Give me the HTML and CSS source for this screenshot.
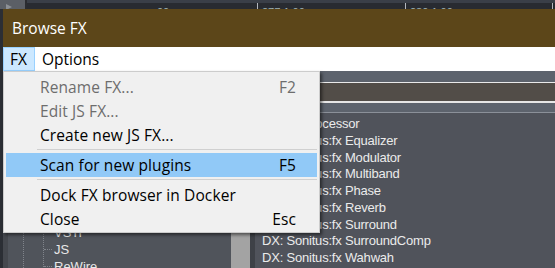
FILE: index.html
```html
<!DOCTYPE html>
<html>
<head>
<meta charset="utf-8">
<link rel="stylesheet" href="styles.css">
</head>
<body>
<div class="topstrip">
  <div class="tsbtn"><span class="tri"></span></div>
  <div class="ruler">
    <div class="rspacer"></div>
    <div class="rseg r0">00</div>
    <div class="rseg tick r1">277.1.00</div>
    <div class="rseg tick r2">280.1.00</div>
    <div class="rseg tick r3"></div>
  </div>
</div>
<div class="window">
  <div class="titlebar">Browse FX</div>
  <div class="menubar">
    <span class="mitem open">FX</span>
    <span class="mitem">Options</span>
  </div>
  <div class="content">
    <div class="leftpane">
      <div class="lstrip"></div>
      <div class="tree">
        <ul class="troot">
          <li class="tnode">Favorites</li>
          <li class="tnode">All Plugins
            <ul class="tkids">
              <li class="tkid">DX</li>
              <li class="tkid">DXi</li>
              <li class="tkid">VST</li>
              <li class="tkid">VST3</li>
              <li class="tkid">CLAP</li>
              <li class="tkid">CLAPi</li>
              <li class="tkid">VST3i</li>
              <li class="tkid">VSTi</li>
              <li class="tkid">JS</li>
              <li class="tkid">ReWire</li>
            </ul>
          </li>
          <li class="tnode">Recent</li>
        </ul>
      </div>
      <div class="vscroll"></div>
      <div class="vgap"></div>
    </div>
    <div class="rightpane">
      <div class="rtop"></div>
      <div class="search"></div>
      <div class="rgap"></div>
      <ul class="fxlist">
        <li>DX: ReProcessor</li>
        <li>DX: Sonitus:fx Equalizer</li>
        <li>DX: Sonitus:fx Modulator</li>
        <li>DX: Sonitus:fx Multiband</li>
        <li>DX: Sonitus:fx Phase</li>
        <li>DX: Sonitus:fx Reverb</li>
        <li>DX: Sonitus:fx Surround</li>
        <li>DX: Sonitus:fx SurroundComp</li>
        <li>DX: Sonitus:fx Wahwah</li>
        <li>DXi: ReaSynth</li>
      </ul>
    </div>
  </div>
  <div class="dropdown">
    <div class="ditem disabled"><span>Rename FX...</span><span>F2</span></div>
    <div class="ditem disabled"><span>Edit JS FX...</span><span></span></div>
    <div class="ditem"><span>Create new JS FX...</span><span></span></div>
    <div class="dsep"></div>
    <div class="ditem hot"><span>Scan for new plugins</span><span>F5</span></div>
    <div class="dsep"></div>
    <div class="ditem"><span>Dock FX browser in Docker</span><span></span></div>
    <div class="ditem"><span>Close</span><span>Esc</span></div>
  </div>
</div>
</body>
</html>
```
FILE: styles.css
```css
* { box-sizing: border-box; }
html, body { margin: 0; padding: 0; }
body {
  width: 555px;
  height: 268px;
  overflow: hidden;
  background: #2b2e34;
  font-family: "Open Sans", "Noto Sans", sans-serif;
}
ul { list-style: none; margin: 0; padding: 0; }

/* top strip (behind window) */
.topstrip {
  display: flex;
  height: 9px;
  overflow: hidden;
}
.tsbtn {
  background: #5b5f66;
  border-right: 2px solid #2a2c31;
  flex: none;
  width: 27px;
  padding: 4px 0 0 6px;
}
.tri {
  display: block;
  width: 0; height: 0;
  border-left: 6px solid #8c9096;
  border-top: 3px solid transparent;
  border-bottom: 3px solid transparent;
}
.ruler {
  flex: 1;
  display: flex;
  background: #282b31;
  border-top: 3px solid #3a3f48;
  font: 11px/11px "Liberation Sans", Arial, sans-serif;
  color: #9fb3b5;
}
.rspacer { width: 130px; flex: none; }
.rseg { flex: none; padding: 4px 0 0 4px; }
.r0 { width: 100px; padding-left: 0; }
.tick { border-left: 1px solid #b4b8be; }
.r1 { width: 148px; }
.r2 { width: 147px; }
.r3 { width: 3px; }

/* window */
.window {
  position: relative;
  margin-left: 3px;
}
.titlebar {
  height: 38px;
  background: #5c4619;
  color: #ffffff;
  font-size: 15.5px;
  line-height: 38px;
  padding-left: 9px;
}
.menubar {
  height: 24px;
  background: #ffffff;
  display: flex;
  font-size: 15.5px;
  color: #000;
}
.mitem {
  line-height: 24px;
  padding: 0 7px;
}
.mitem.open {
  background: #cce8ff;
  border: 1px solid #99d1ff;
  line-height: 22px;
  padding: 0 7px 0 6px;
}

.content {
  display: flex;
  height: 197px;
  overflow: hidden;
}
.leftpane {
  width: 252px;
  flex: none;
  display: flex;
}
.lstrip { width: 5px; flex: none; background: #45484e; }
.tree {
  flex: 1;
  background: #50545b;
  font: 13px/17px "Liberation Sans", Arial, sans-serif;
  color: #e8e8e8;
  overflow: hidden;
}
.troot {
  margin-left: 15px;
  border-left: 1px dotted #80848b;
}
.tnode { padding-left: 10px; }
.tkids {
  margin-left: 9px;
  border-left: 1px dotted #80848b;
}
.tkid { padding-left: 10px; position: relative; }
.tkid::before {
  content: "";
  position: absolute;
  left: 0;
  top: 8px;
  width: 8px;
  border-top: 1px dotted #80848b;
}
.vscroll { width: 19px; flex: none; background: #a3a3a3; }
.vgap { width: 5px; flex: none; background: #3e4147; }

.rightpane {
  flex: 1;
  min-width: 0;
  background: #50535b;
  display: flex;
  flex-direction: column;
  overflow: hidden;
}
.rtop { height: 11px; flex: none; background: #5d636d; }
.search {
  height: 21px;
  flex: none;
  background: #524d48;
  border-top: 1px solid #eaeaea;
  border-bottom: 2px solid #e6e6e6;
}
.rgap {
  height: 10px;
  flex: none;
  background: #5d636d;
  border-bottom: 1px solid #8b9099;
}
.fxlist {
  flex: none;
  padding: 3px 0 0 7px;
  font: 13px/16.75px "Liberation Sans", Arial, sans-serif;
  letter-spacing: -0.2px;
  color: #ebebeb;
  white-space: nowrap;
}

/* dropdown menu */
.dropdown {
  position: absolute;
  left: 0;
  top: 62px;
  width: 317px;
  background: #f0f0f0;
  border: 1px solid #cccccc;
  padding: 3px 0 1px;
  box-shadow: 2px 2px 3px rgba(0, 0, 0, 0.5);
  font-size: 15.5px;
  letter-spacing: 0.1px;
  color: #000;
}
.ditem {
  display: flex;
  justify-content: space-between;
  height: 24px;
  line-height: 24px;
  margin: 0 2px;
  padding: 0 21px 0 34px;
}
.ditem.disabled { color: #6d6d6d; }
.ditem.hot { background: #91c9f7; }
.dsep {
  height: 1px;
  background: #d0d0d0;
  margin: 2px 2px 3px 33px;
}
```
